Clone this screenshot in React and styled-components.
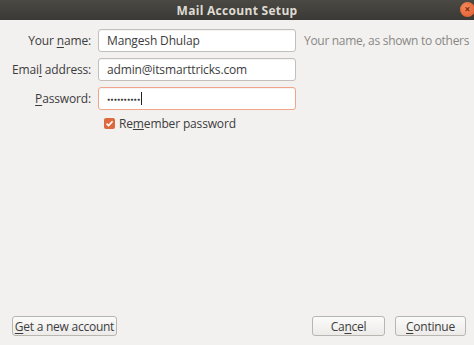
import React from "react";
import styled, { createGlobalStyle } from "styled-components";

const Global = createGlobalStyle`
  html, body { margin: 0; padding: 0; background: #f2f1f0; }
  body { font-family: "Open Sans", "Noto Sans", sans-serif; }
`

const Window = styled.div`
  width: 474px;
  height: 345px;
  display: flex;
  flex-direction: column;
  background: #f2f1f0;
  overflow: hidden;
`

const TitleBar = styled.div`
  height: 20px;
  flex-shrink: 0;
  background: linear-gradient(#4a4944, #3a3935);
  display: flex;
  align-items: center;
  justify-content: center;
  position: relative;
  color: #dfdbd2;
  font-size: 12px;
  font-weight: 700;
  letter-spacing: 0.3px;
`

const Close = styled.div`
  position: absolute;
  right: -1px;
  top: 2px;
  width: 15px;
  height: 15px;
  border-radius: 50%;
  background: radial-gradient(circle at 40% 35%, #f58a5c, #e0552a);
  color: #7a2a10;
  font-size: 10px;
  line-height: 15px;
  text-align: center;
`

const Body = styled.div`
  flex: 1;
  display: flex;
  flex-direction: column;
  justify-content: space-between;
  padding: 9px 8px 9px 12px;
  font-size: 12px;
  letter-spacing: -0.15px;
  color: #3c3c3c;
`

const Form = styled.div`
  display: grid;
  grid-template-columns: 79px 198px auto;
  column-gap: 7px;
  row-gap: 6px;
  align-items: center;
`

const Label = styled.label`
  text-align: right;
  white-space: nowrap;
  u { text-decoration-thickness: 1px; text-underline-offset: 2px; }
`

const Input = styled.div`
  height: 23px;
  box-sizing: border-box;
  border: 1px solid ${p => (p.focus ? "#f0a48a" : "#c3c0bb")};
  border-radius: 3px;
  background: #fff;
  display: flex;
  align-items: center;
  padding-left: 8px;
  white-space: nowrap;
  box-shadow: inset 0 1px 1px rgba(0,0,0,0.05);
`

const Dots = styled.span`
  font-size: 5px;
  letter-spacing: 0.3px;
  color: #333;
`

const Caret = styled.span`
  display: inline-block;
  width: 1px;
  height: 13px;
  background: #222;
  margin-left: 1px;
`

const Hint = styled.span`
  color: #8a8884;
  white-space: nowrap;
  letter-spacing: -0.3px;
  margin-left: 1px;
`

const CheckRow = styled.div`
  grid-column: 2 / 4;
  display: flex;
  align-items: center;
  gap: 4px;
  padding-left: 6px;
  margin-top: -1px;
`

const Box = styled.span`
  width: 11px;
  height: 11px;
  border-radius: 2px;
  background: #dc6a3e;
  display: inline-flex;
  align-items: center;
  justify-content: center;
`

const Footer = styled.div`
  display: flex;
  align-items: center;
  gap: 10px;
`

const Spacer = styled.div`
  flex: 1;
`

const Button = styled.button`
  height: 20px;
  width: ${p => p.w}px;
  padding: 0;
  white-space: nowrap;
  border: 1px solid #b9b6b0;
  border-radius: 3px;
  background: linear-gradient(#fbfbfa, #ecebe9);
  font-family: inherit;
  font-size: 12px;
  letter-spacing: -0.25px;
  color: #3c3c3c;
  u { text-decoration-thickness: 1px; text-underline-offset: 2px; }
`

export default function App() {
  return (
    <Window>
      <Global />
      <TitleBar>
        Mail Account Setup
        <Close>×</Close>
      </TitleBar>
      <Body>
        <Form>
          <Label>Your <u>n</u>ame:</Label>
          <Input>Mangesh Dhulap</Input>
          <Hint>Your name, as shown to others</Hint>

          <Label>Emai<u>l</u> address:</Label>
          <Input>admin@itsmarttricks.com</Input>
          <span />

          <Label><u>P</u>assword:</Label>
          <Input focus>
            <Dots>●●●●●●●●●●</Dots>
            <Caret />
          </Input>
          <span />

          <CheckRow>
            <Box>
              <svg width="9" height="9" viewBox="0 0 9 9">
                <path d="M1.5 4.6 L3.6 6.6 L7.6 2.2" fill="none" stroke="#fff" strokeWidth="1.6" />
              </svg>
            </Box>
            <span>Re<u>m</u>ember password</span>
          </CheckRow>
        </Form>
        <Footer>
          <Button w={105}><u>G</u>et a new account</Button>
          <Spacer />
          <Button w={73}>Ca<u>n</u>cel</Button>
          <Button w={71}><u>C</u>ontinue</Button>
        </Footer>
      </Body>
    </Window>
  );
}
